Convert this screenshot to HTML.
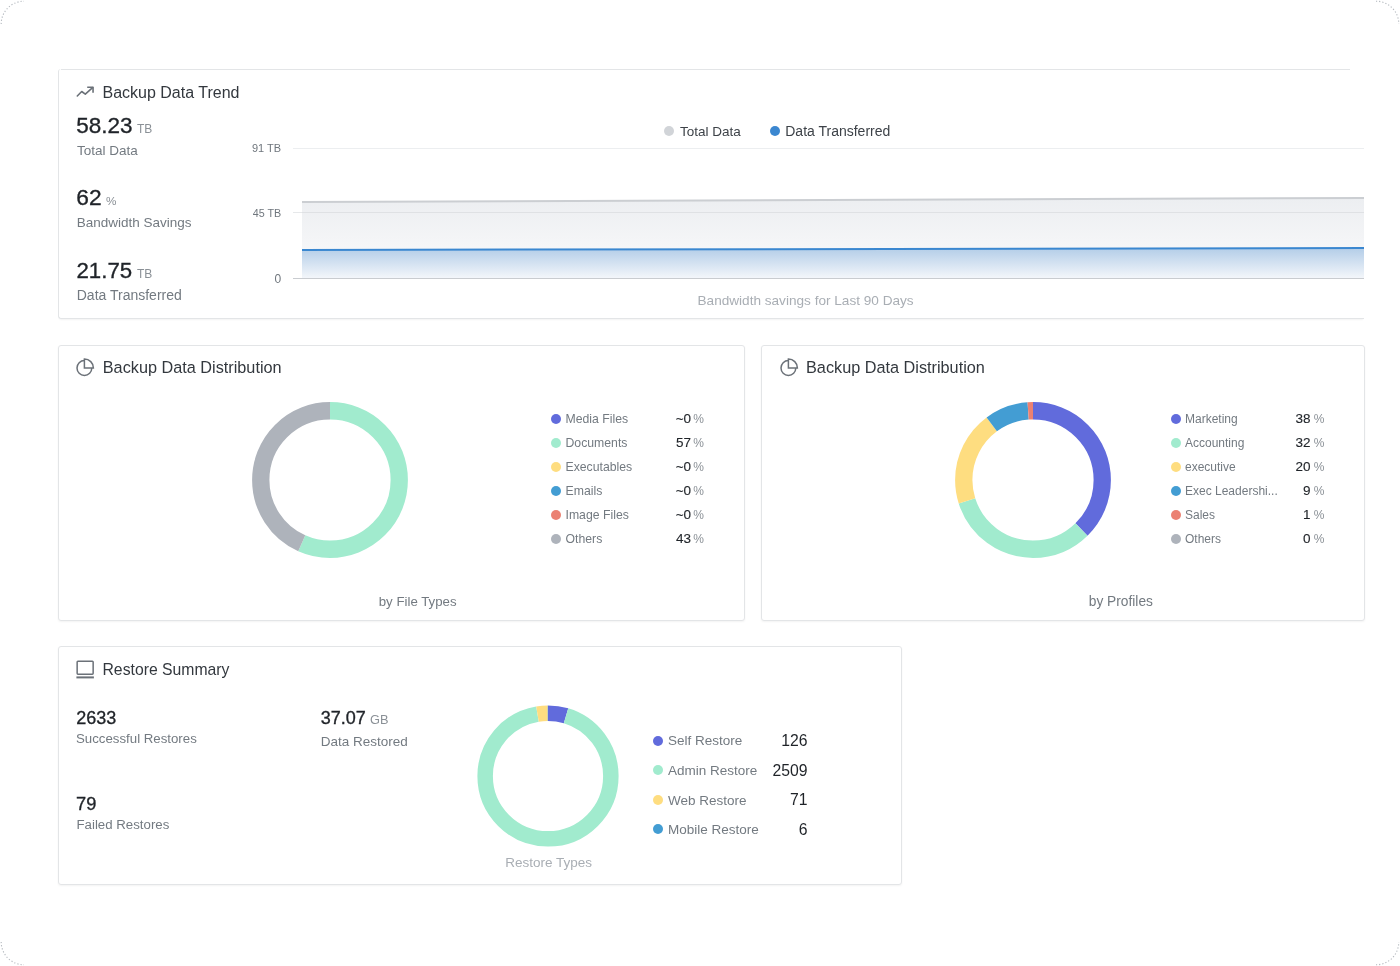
<!DOCTYPE html><html><head><meta charset="utf-8"><title>Dashboard</title><style>
html,body{margin:0;padding:0;background:#fff;}
body{width:1400px;height:966px;position:relative;overflow:hidden;font-family:"Liberation Sans",sans-serif;}
.t{position:absolute;white-space:nowrap;line-height:1;}
.b{-webkit-text-stroke:0.35px currentColor;}
.b2{-webkit-text-stroke:0.12px currentColor;}
.abs{position:absolute;display:block;}
.card{position:absolute;box-sizing:border-box;border:1px solid #e3e5e7;border-radius:3px;background:#fff;box-shadow:0 1px 2px rgba(0,0,0,0.05);}
.dot{position:absolute;width:10px;height:10px;border-radius:50%;}
</style></head><body><div style="position:absolute;left:0;top:0;width:1400px;height:966px;will-change:transform">
<svg class="abs" style="left:0;top:0" width="1400" height="966"><g fill="none" stroke="#b3b8be" stroke-width="1.1" stroke-dasharray="1.2 2">
<path d="M1.2 24 A22.8 22.8 0 0 1 24 1.2"/><path d="M1376 1.2 A22.8 22.8 0 0 1 1398.8 24"/>
<path d="M1.2 942 A22.8 22.8 0 0 0 24 964.8"/><path d="M1376 964.8 A22.8 22.8 0 0 0 1398.8 942"/></g></svg>

<div class="card" style="left:58px;top:69px;width:1306px;height:250px;border-right:none;border-top:none;border-radius:3px 0 0 3px;box-shadow:0 2px 2px -1px rgba(0,0,0,0.05)"></div>
<div class="abs" style="left:61px;top:69px;width:1289px;height:1px;background:#e3e5e7"></div>
<svg class="abs" style="left:70px;top:80px" width="30" height="25" viewBox="0 0 30 25"><g fill="none" stroke="#6b7178" stroke-width="1.6" stroke-linejoin="round"><path d="M7.3 16 L11.7 11.5 L15.3 14.2 L22.6 7.7" stroke-linecap="round"/><path d="M17.2 7.25 H23.05 V12.7"/></g></svg>
<div class="t" style="left:102.50px;top:85px;font-size:16.0px;color:#33383e;">Backup Data Trend</div>
<div class="t b" style="left:76.25px;top:115px;font-size:22.5px;color:#1f2328;">58.23</div>
<div class="t" style="left:137.00px;top:123px;font-size:12.0px;color:#8a9096;">TB</div>
<div class="t" style="left:77.00px;top:144px;font-size:13.5px;color:#737a81;">Total Data</div>
<div class="t b" style="left:76.25px;top:186px;font-size:22.75px;color:#1f2328;">62</div>
<div class="t" style="left:106.00px;top:195px;font-size:11.75px;color:#8a9096;">%</div>
<div class="t" style="left:76.75px;top:216px;font-size:13.5px;color:#737a81;">Bandwidth Savings</div>
<div class="t b" style="left:76.50px;top:260px;font-size:22.25px;color:#1f2328;">21.75</div>
<div class="t" style="left:137.00px;top:268px;font-size:12.0px;color:#8a9096;">TB</div>
<div class="t" style="left:76.75px;top:288px;font-size:14.0px;color:#737a81;">Data Transferred</div>
<div class="t" style="left:252.00px;top:143px;font-size:11.0px;color:#6f767d;">91 TB</div>
<div class="t" style="left:252.75px;top:208px;font-size:10.75px;color:#6f767d;">45 TB</div>
<div class="t" style="left:274.50px;top:273px;font-size:12.0px;color:#6f767d;">0</div>
<div class="t" style="left:680.00px;top:125px;font-size:13.5px;color:#3d4248;">Total Data</div>
<div class="t" style="left:785.25px;top:124px;font-size:14.0px;color:#3d4248;">Data Transferred</div>
<div class="t" style="left:697.50px;top:294px;font-size:13.6px;color:#a9aeb4;">Bandwidth savings for Last 90 Days</div>
<div class="abs" style="left:293px;top:148px;width:1071px;height:1px;background:#eceef0"></div>
<svg class="abs" style="left:0;top:0" width="1400" height="330" viewBox="0 0 1400 330">
<defs>
<linearGradient id="gg" x1="0" y1="0" x2="0" y2="1"><stop offset="0" stop-color="#eceef1"/><stop offset="1" stop-color="#fbfbfc"/></linearGradient>
<linearGradient id="bg" x1="0" y1="0" x2="0" y2="1"><stop offset="0" stop-color="#b3cde8"/><stop offset="1" stop-color="#f3f6fa"/></linearGradient>
</defs>
<line x1="293" y1="212.5" x2="1364" y2="212.5" stroke="#e6e8ea" stroke-width="1"/>
<path d="M302 202 L1364 198 L1364 278 L302 278 Z" fill="url(#gg)"/>
<line x1="302" y1="212.5" x2="1364" y2="212.5" stroke="#dfe1e4" stroke-width="1"/>
<path d="M302 250 L1364 248 L1364 278 L302 278 Z" fill="url(#bg)"/>
<path d="M302 202 L1364 198" stroke="#cbced2" stroke-width="2" fill="none"/>
<path d="M302 250 L1364 248" stroke="#3a87d0" stroke-width="2" fill="none"/>
<line x1="293" y1="278.5" x2="1364" y2="278.5" stroke="#c9ccd0" stroke-width="1"/>
</svg>
<div class="dot" style="left:664px;top:126px;background:#d1d4d8"></div>
<div class="dot" style="left:770px;top:126px;background:#3b87d0"></div>
<div class="card" style="left:58px;top:345px;width:687px;height:276px"></div>
<div class="card" style="left:761px;top:345px;width:604px;height:276px"></div>
<svg class="abs" style="left:76px;top:356px" width="24" height="24" viewBox="0 0 24 24"><g fill="none" stroke="#6b7178" stroke-width="1.5"><path d="M8.4 4.6 A7.4 7.4 0 1 0 15.8 12"/><path d="M8.4 12 V3 A9 9 0 0 1 17.4 12 Z" stroke-linejoin="miter"/></g></svg>
<svg class="abs" style="left:779.5px;top:356px" width="24" height="24" viewBox="0 0 24 24"><g fill="none" stroke="#6b7178" stroke-width="1.5"><path d="M8.4 4.6 A7.4 7.4 0 1 0 15.8 12"/><path d="M8.4 12 V3 A9 9 0 0 1 17.4 12 Z" stroke-linejoin="miter"/></g></svg>
<div class="t" style="left:102.75px;top:359px;font-size:16.25px;color:#33383e;">Backup Data Distribution</div>
<div class="t" style="left:806.00px;top:359px;font-size:16.25px;color:#33383e;">Backup Data Distribution</div>
<div class="t" style="left:378.75px;top:595px;font-size:13.25px;color:#737a81;">by File Types</div>
<div class="t" style="left:1088.75px;top:595px;font-size:13.75px;color:#737a81;">by Profiles</div>
<svg class="abs" style="left:249.90px;top:400.00px" width="160" height="160" viewBox="-80.0 -80.0 160 160"><circle r="69.250" fill="none" stroke="#a1ebce" stroke-width="17.30" stroke-dasharray="246.273 435.111" stroke-dashoffset="0.000" transform="rotate(-90)"/><circle r="69.250" fill="none" stroke="#aeb3bb" stroke-width="17.30" stroke-dasharray="188.838 435.111" stroke-dashoffset="-246.273" transform="rotate(-90)"/></svg>
<svg class="abs" style="left:953.20px;top:400.00px" width="160" height="160" viewBox="-80.0 -80.0 160 160"><circle r="69.250" fill="none" stroke="#616bdc" stroke-width="17.30" stroke-dasharray="163.602 435.111" stroke-dashoffset="0.000" transform="rotate(-90)"/><circle r="69.250" fill="none" stroke="#a1ebce" stroke-width="17.30" stroke-dasharray="140.976 435.111" stroke-dashoffset="-163.602" transform="rotate(-90)"/><circle r="69.250" fill="none" stroke="#fedd80" stroke-width="17.30" stroke-dasharray="85.717 435.111" stroke-dashoffset="-304.577" transform="rotate(-90)"/><circle r="69.250" fill="none" stroke="#439dd3" stroke-width="17.30" stroke-dasharray="39.160 435.111" stroke-dashoffset="-390.294" transform="rotate(-90)"/><circle r="69.250" fill="none" stroke="#eb8172" stroke-width="17.30" stroke-dasharray="5.656 435.111" stroke-dashoffset="-429.454" transform="rotate(-90)"/></svg>
<div class="dot" style="left:551px;top:414px;background:#616bdc"></div>
<div class="t" style="left:565.5px;top:413px;font-size:12.25px;color:#737a81">Media Files</div>
<div class="t b2" style="right:708.90px;top:412px;font-size:13.5px;color:#1f2328">~0</div>
<div class="t" style="left:693.25px;top:413px;font-size:12.0px;color:#8a9096">%</div>
<div class="dot" style="left:551px;top:438px;background:#a1ebce"></div>
<div class="t" style="left:565.5px;top:437px;font-size:12.25px;color:#737a81">Documents</div>
<div class="t b2" style="right:708.90px;top:436px;font-size:13.5px;color:#1f2328">57</div>
<div class="t" style="left:693.25px;top:437px;font-size:12.0px;color:#8a9096">%</div>
<div class="dot" style="left:551px;top:462px;background:#fedd80"></div>
<div class="t" style="left:565.5px;top:461px;font-size:12.25px;color:#737a81">Executables</div>
<div class="t b2" style="right:708.90px;top:460px;font-size:13.5px;color:#1f2328">~0</div>
<div class="t" style="left:693.25px;top:461px;font-size:12.0px;color:#8a9096">%</div>
<div class="dot" style="left:551px;top:486px;background:#439dd3"></div>
<div class="t" style="left:565.5px;top:485px;font-size:12.25px;color:#737a81">Emails</div>
<div class="t b2" style="right:708.90px;top:484px;font-size:13.5px;color:#1f2328">~0</div>
<div class="t" style="left:693.25px;top:485px;font-size:12.0px;color:#8a9096">%</div>
<div class="dot" style="left:551px;top:510px;background:#eb8172"></div>
<div class="t" style="left:565.5px;top:509px;font-size:12.25px;color:#737a81">Image Files</div>
<div class="t b2" style="right:708.90px;top:508px;font-size:13.5px;color:#1f2328">~0</div>
<div class="t" style="left:693.25px;top:509px;font-size:12.0px;color:#8a9096">%</div>
<div class="dot" style="left:551px;top:534px;background:#aeb3bb"></div>
<div class="t" style="left:565.5px;top:533px;font-size:12.25px;color:#737a81">Others</div>
<div class="t b2" style="right:708.90px;top:532px;font-size:13.5px;color:#1f2328">43</div>
<div class="t" style="left:693.25px;top:533px;font-size:12.0px;color:#8a9096">%</div>
<div class="dot" style="left:1170.5px;top:414px;background:#616bdc"></div>
<div class="t" style="left:1185.0px;top:413px;font-size:12.0px;color:#737a81">Marketing</div>
<div class="t b2" style="right:89.60px;top:412px;font-size:13.5px;color:#1f2328">38</div>
<div class="t" style="left:1313.6499999999999px;top:413px;font-size:12.0px;color:#8a9096">%</div>
<div class="dot" style="left:1170.5px;top:438px;background:#a1ebce"></div>
<div class="t" style="left:1185.0px;top:437px;font-size:12.0px;color:#737a81">Accounting</div>
<div class="t b2" style="right:89.60px;top:436px;font-size:13.5px;color:#1f2328">32</div>
<div class="t" style="left:1313.6499999999999px;top:437px;font-size:12.0px;color:#8a9096">%</div>
<div class="dot" style="left:1170.5px;top:462px;background:#fedd80"></div>
<div class="t" style="left:1185.0px;top:461px;font-size:12.0px;color:#737a81">executive</div>
<div class="t b2" style="right:89.60px;top:460px;font-size:13.5px;color:#1f2328">20</div>
<div class="t" style="left:1313.6499999999999px;top:461px;font-size:12.0px;color:#8a9096">%</div>
<div class="dot" style="left:1170.5px;top:486px;background:#439dd3"></div>
<div class="t" style="left:1185.0px;top:485px;font-size:12.0px;color:#737a81">Exec Leadershi...</div>
<div class="t b2" style="right:89.60px;top:484px;font-size:13.5px;color:#1f2328">9</div>
<div class="t" style="left:1313.6499999999999px;top:485px;font-size:12.0px;color:#8a9096">%</div>
<div class="dot" style="left:1170.5px;top:510px;background:#eb8172"></div>
<div class="t" style="left:1185.0px;top:509px;font-size:12.0px;color:#737a81">Sales</div>
<div class="t b2" style="right:89.60px;top:508px;font-size:13.5px;color:#1f2328">1</div>
<div class="t" style="left:1313.6499999999999px;top:509px;font-size:12.0px;color:#8a9096">%</div>
<div class="dot" style="left:1170.5px;top:534px;background:#aeb3bb"></div>
<div class="t" style="left:1185.0px;top:533px;font-size:12.0px;color:#737a81">Others</div>
<div class="t b2" style="right:89.60px;top:532px;font-size:13.5px;color:#1f2328">0</div>
<div class="t" style="left:1313.6499999999999px;top:533px;font-size:12.0px;color:#8a9096">%</div>
<div class="card" style="left:58px;top:646px;width:844px;height:239px"></div>
<svg class="abs" style="left:76px;top:660px" width="18" height="19" viewBox="0 0 18 19"><rect x="1.15" y="1.15" width="16" height="13" rx="0.8" fill="none" stroke="#6b7178" stroke-width="1.5"/><line x1="0.4" y1="17.4" x2="17.9" y2="17.4" stroke="#6b7178" stroke-width="2"/></svg>
<div class="t" style="left:102.50px;top:662px;font-size:15.75px;color:#33383e;">Restore Summary</div>
<div class="t b" style="left:76.25px;top:709px;font-size:18.0px;color:#1f2328;">2633</div>
<div class="t" style="left:76.00px;top:732px;font-size:13.25px;color:#737a81;">Successful Restores</div>
<div class="t b" style="left:320.75px;top:709px;font-size:18.0px;color:#1f2328;">37.07</div>
<div class="t" style="left:370.00px;top:714px;font-size:12.75px;color:#8a9096;">GB</div>
<div class="t" style="left:320.75px;top:735px;font-size:13.5px;color:#737a81;">Data Restored</div>
<div class="t b" style="left:76.00px;top:795px;font-size:18.25px;color:#1f2328;">79</div>
<div class="t" style="left:76.50px;top:818px;font-size:13.25px;color:#737a81;">Failed Restores</div>
<div class="t" style="left:505.25px;top:856px;font-size:13.5px;color:#a9aeb4;">Restore Types</div>
<svg class="abs" style="left:475.30px;top:703.20px" width="146" height="146" viewBox="-73.0 -73.0 146 146"><circle r="62.850" fill="none" stroke="#616bdc" stroke-width="15.50" stroke-dasharray="18.347 394.898" stroke-dashoffset="0.000" transform="rotate(-90)"/><circle r="62.850" fill="none" stroke="#a1ebce" stroke-width="15.50" stroke-dasharray="365.339 394.898" stroke-dashoffset="-18.347" transform="rotate(-90)"/><circle r="62.850" fill="none" stroke="#fedd80" stroke-width="15.50" stroke-dasharray="10.338 394.898" stroke-dashoffset="-383.686" transform="rotate(-90)"/><circle r="62.850" fill="none" stroke="#439dd3" stroke-width="15.50" stroke-dasharray="0.874 394.898" stroke-dashoffset="-394.025" transform="rotate(-90)"/></svg>
<div class="dot" style="left:652.7px;top:736.0px;background:#616bdc"></div>
<div class="t" style="left:668.0px;top:734px;font-size:13.5px;color:#737a81">Self Restore</div>
<div class="t" style="right:592.40px;top:733px;font-size:15.75px;color:#1f2328">126</div>
<div class="dot" style="left:652.7px;top:765.0px;background:#a1ebce"></div>
<div class="t" style="left:668.0px;top:764px;font-size:13.5px;color:#737a81">Admin Restore</div>
<div class="t" style="right:592.40px;top:763px;font-size:15.75px;color:#1f2328">2509</div>
<div class="dot" style="left:652.7px;top:795.0px;background:#fedd80"></div>
<div class="t" style="left:668.0px;top:794px;font-size:13.5px;color:#737a81">Web Restore</div>
<div class="t" style="right:592.40px;top:792px;font-size:15.75px;color:#1f2328">71</div>
<div class="dot" style="left:652.7px;top:824.3px;background:#439dd3"></div>
<div class="t" style="left:668.0px;top:823px;font-size:13.5px;color:#737a81">Mobile Restore</div>
<div class="t" style="right:592.40px;top:822px;font-size:15.75px;color:#1f2328">6</div>
</div></body></html>
